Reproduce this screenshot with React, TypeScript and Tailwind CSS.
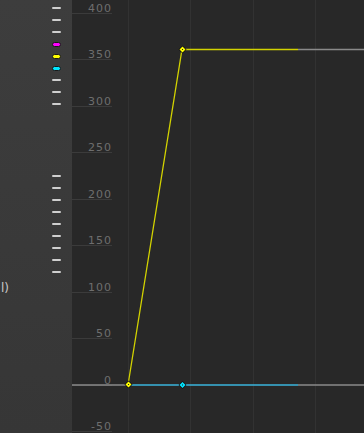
import React from 'react';

const uiFont = { fontFamily: '"DejaVu Sans", "Liberation Sans", sans-serif' };

type Marker = 'dash' | 'magenta' | 'yellow' | 'cyan';

const topMarkers: Marker[] = ['dash', 'dash', 'dash', 'magenta', 'yellow', 'cyan', 'dash', 'dash', 'dash'];
const lowMarkers: Marker[] = Array(9).fill('dash');

const MarkerRow: React.FC<{ kind: Marker }> = ({ kind }) => (
  <div className="h-[12px] flex items-center justify-center">
    {kind === 'dash' && <div className="w-[9px] h-[2px] bg-[#cfcfcf] rounded-[1px]" />}
    {kind === 'magenta' && <div className="w-[10px] h-[5px] bg-[#ff00ff] border border-[#1a1a1a] rounded-full" />}
    {kind === 'yellow' && <div className="w-[10px] h-[5px] bg-[#ffff00] border border-[#1a1a1a] rounded-full" />}
    {kind === 'cyan' && <div className="w-[10px] h-[5px] bg-[#00e5ff] border border-[#1a1a1a] rounded-full" />}
  </div>
);

// keyframe point: small diamond with a dark rim
const Key: React.FC<{ x: number; y: number; color: string }> = ({ x, y, color }) => (
  <g>
    <path d={`M${x} ${y - 4}L${x + 4} ${y}L${x} ${y + 4}L${x - 4} ${y}Z`} fill="#111" />
    <path d={`M${x} ${y - 3}L${x + 3} ${y}L${x} ${y + 3}L${x - 3} ${y}Z`} fill={color} />
    <rect x={x - 0.5} y={y - 0.5} width={1} height={1} fill="#222" />
  </g>
);

export default function App() {
  const labels = [400, 350, 300, 250, 200, 150, 100, 50, 0, -50];
  const gridX = [56.5, 118.5, 181.5, 243.5];

  return (
    <div className="w-[364px] h-[433px] flex overflow-hidden bg-[#282828]">
      {/* channel list */}
      <div className="w-[72px] h-full shrink-0 bg-gradient-to-b from-[#3d3d3d] to-[#363636] relative">
        <div className="flex flex-col pt-[2px] pl-[52px] w-[61px]">
          {topMarkers.map((m, i) => (
            <MarkerRow key={'t' + i} kind={m} />
          ))}
          <div className="h-[60px]" />
          {lowMarkers.map((m, i) => (
            <MarkerRow key={'l' + i} kind={m} />
          ))}
        </div>
        <span className="absolute left-[1px] top-[279px] text-[12px] text-[#c8c8c8]" style={uiFont}>
          l)
        </span>
      </div>

      {/* curve graph */}
      <div className="flex-1 h-full">
        <svg width={292} height={433} className="block" style={uiFont}>
          {gridX.map((x) => (
            <line key={x} x1={x} y1={0} x2={x} y2={433} stroke="#323232" strokeWidth={1} />
          ))}
          {labels.map((v, i) => {
            const y = Math.round(13 + 46.45 * i) + 0.5;
            return (
              <g key={v}>
                <line x1={0} y1={y} x2={40} y2={y} stroke="#3b3b3b" strokeWidth={1} />
                <text x={40} y={y - 2} textAnchor="end" fontSize={11} letterSpacing={1} fill="#6e6e6e">
                  {v}
                </text>
              </g>
            );
          })}

          {/* extrapolated parts */}
          <line x1={0} y1={385} x2={56} y2={385} stroke="#8a8a8a" strokeWidth={1.5} />
          <line x1={226} y1={385} x2={292} y2={385} stroke="#8a8a8a" strokeWidth={1.5} />
          <line x1={226} y1={49.5} x2={292} y2={49.5} stroke="#8a8a8a" strokeWidth={1.5} />

          {/* cyan channel */}
          <line x1={56} y1={385} x2={226} y2={385} stroke="#3ab4dc" strokeWidth={1.5} />
          {/* yellow channel */}
          <polyline points="56,385 110,49.5 226,49.5" fill="none" stroke="#d2d200" strokeWidth={1.3} />

          <Key x={56.5} y={384.5} color="#ffff00" />
          <Key x={110.5} y={49.5} color="#ffff00" />
          <Key x={110.5} y={385} color="#00e5ff" />
        </svg>
      </div>
    </div>
  );
}
